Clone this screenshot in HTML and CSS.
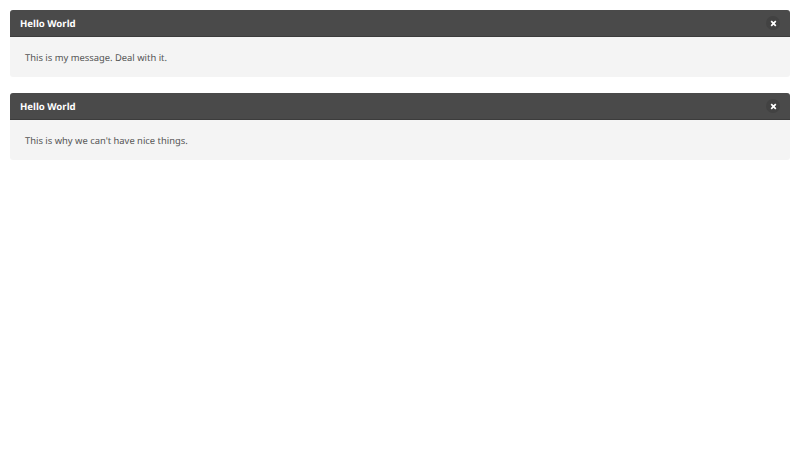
FILE: index.html
```html
<html>
  <head>
    <meta charset="utf-8">
    <title>Messages</title>
    <link rel="stylesheet" href="styles.css">
  </head>
  <body>
    <div class="message">
      <div class="message-header">
        <span class="message-title">Hello World</span>
        <span class="message-close">
          <svg width="7" height="7" viewBox="0 0 7 7"><path d="M1.2 1.2L5.8 5.8M5.8 1.2L1.2 5.8" /></svg>
        </span>
      </div>
      <div class="message-body">This is my message. Deal with it.</div>
    </div>
    <div class="message">
      <div class="message-header">
        <span class="message-title">Hello World</span>
        <span class="message-close">
          <svg width="7" height="7" viewBox="0 0 7 7"><path d="M1.2 1.2L5.8 5.8M5.8 1.2L1.2 5.8" /></svg>
        </span>
      </div>
      <div class="message-body">This is why we can't have nice things.</div>
    </div>
  </body>
</html>
```

FILE: styles.css
```css
body {
  margin: 0;
  padding: 10px;
  background: #fff;
  font-family: "Noto Sans", sans-serif;
  text-rendering: geometricPrecision;
}
.message {
  margin-bottom: 16px;
  background: #f4f4f4;
  border-radius: 3px;
  overflow: hidden;
}
.message-header {
  display: flex;
  align-items: center;
  justify-content: space-between;
  height: 27px;
  box-sizing: border-box;
  padding: 0 10px;
  background: #4a4a4a;
  border-bottom: 1px solid #3c3c3c;
}
.message-title {
  color: #fff;
  font-size: 9.6px;
  font-weight: bold;
}
.message-close {
  display: flex;
  align-items: center;
  justify-content: center;
  width: 14px;
  height: 14px;
  background: #424242;
  border-radius: 50%;
}
.message-close svg {
  stroke: #fff;
  stroke-width: 1.7;
}
.message-body {
  padding: 13px 15px 12px;
  color: #555;
  font-size: 9.4px;
  line-height: 15px;
}
```
